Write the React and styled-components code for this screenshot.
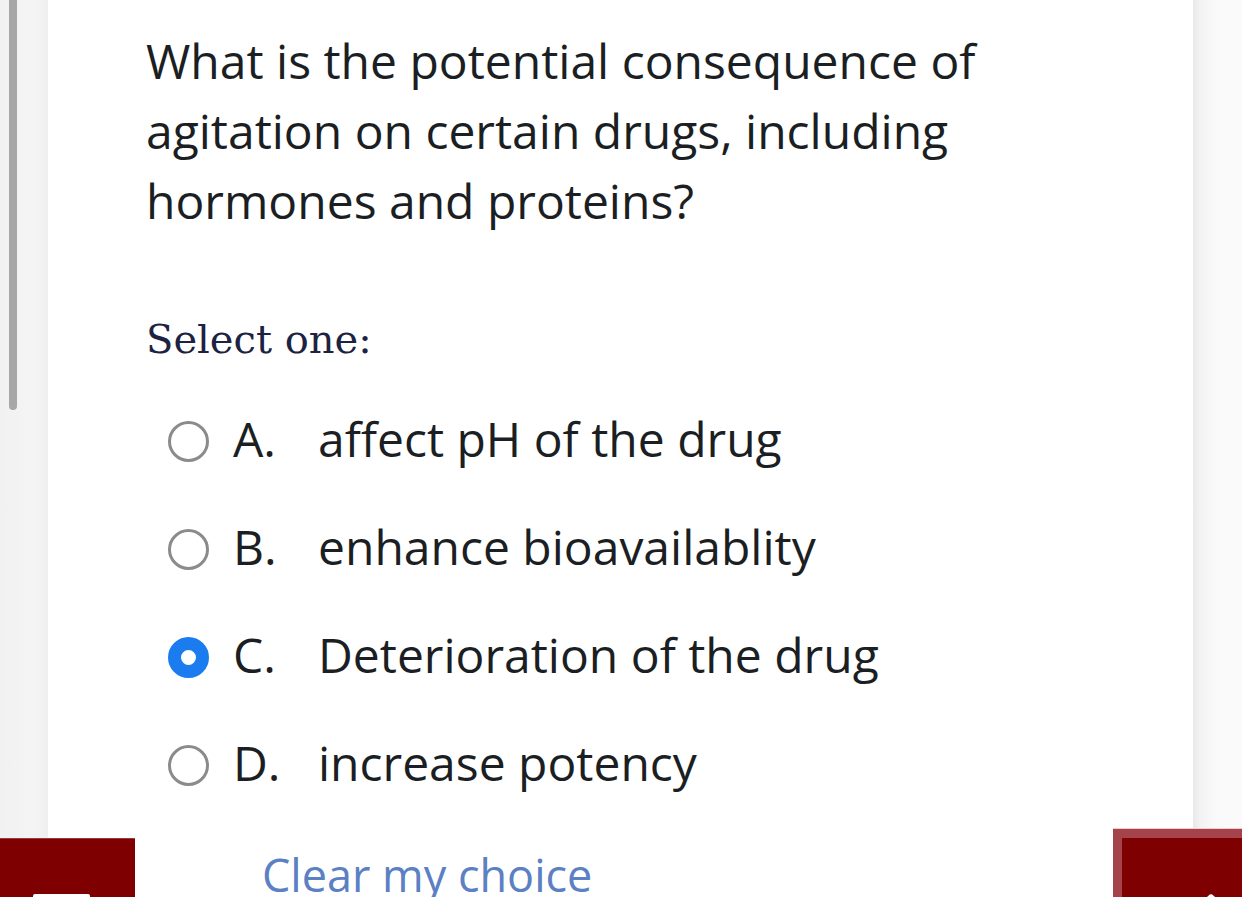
import React from "react";
import styled, { createGlobalStyle } from "styled-components";

const Global = createGlobalStyle`
  html, body {
    margin: 0;
    padding: 0;
    height: 897px;
    overflow: hidden;
    background: #ffffff;
  }
  body {
    font-family: "Open Sans", "Noto Sans", sans-serif;
    color: #1d2125;
  }
`;

const Page = styled.div`
  display: flex;
  height: 897px;
  overflow: hidden;
`;

const LeftGutter = styled.div`
  width: 48px;
  flex: none;
  padding-left: 9px;
  box-sizing: border-box;
  background: linear-gradient(to right, #f1f1f1 0%, #f4f4f4 70%, #efefef 100%);
`;

const Scrollbar = styled.div`
  width: 8px;
  height: 410px;
  background: #a7a7a7;
  border-radius: 0 0 4px 4px;
`;

const RightGutter = styled.div`
  width: 49px;
  flex: none;
  background: linear-gradient(to right, #e9e9e9 0%, #f3f3f3 15%, #f9f9f9 45%, #fbfbfb 100%);
`;

const Card = styled.main`
  flex: 1;
  background: #ffffff;
  padding: 26px 100px 0 98px;
  box-sizing: border-box;
`;

const Question = styled.p`
  margin: 0;
  font-size: 48px;
  line-height: 70px;
  color: #1b1f23;
`;

const Prompt = styled.div`
  margin-top: 80px;
  font-family: "DejaVu Serif", "Liberation Serif", serif;
  font-size: 40px;
  line-height: normal;
  color: #1c2342;
`;

const Options = styled.div`
  margin-top: 22px;
  padding-left: 22px;
`;

const OptionRow = styled.label`
  display: flex;
  align-items: center;
  height: 108px;
  font-size: 48px;
  line-height: normal;
  color: #1b1f23;
`;

const Radio = styled.span`
  flex: none;
  width: 41px;
  height: 41px;
  margin-top: 7px;
  box-sizing: border-box;
  border-radius: 50%;
  background: #ffffff;
  border: ${(p) => (p.$checked ? "13px solid #1b7cf0" : "3.5px solid #8b8b8b")};
`;

const Letter = styled.span`
  flex: none;
  width: 85px;
  margin-left: 24px;
`;

const Clear = styled.a`
  display: block;
  margin-top: 28px;
  padding-left: 116px;
  font-size: 45px;
  line-height: normal;
  color: #5b80c3;
  text-decoration: none;
`;

const NavButton = styled.div`
  position: fixed;
  left: 0;
  top: 838px;
  width: 135px;
  height: 70px;
  background: #7f0000;
  border-top: 1px solid #9a3a3a;
  box-sizing: border-box;
`;

const NavIconBar = styled.div`
  position: absolute;
  left: 33px;
  top: 55px;
  width: 57px;
  height: 6px;
  border-radius: 2px;
  background: #ffffff;
`;

const TopButton = styled.div`
  position: fixed;
  left: 1113px;
  top: 829px;
  width: 160px;
  height: 90px;
  box-sizing: border-box;
  background: #7f0000;
  border: 9px solid #a4434b;
  box-shadow: 0 -1px 0 #f3c9c9;
`;

const Caret = styled.svg`
  position: absolute;
  left: 65px;
  top: 50px;
`;

const options = [
  { letter: "A.", text: "affect pH of the drug" },
  { letter: "B.", text: "enhance bioavailablity" },
  { letter: "C.", text: "Deterioration of the drug", checked: true },
  { letter: "D.", text: "increase potency" },
];

export default function App() {
  return (
    <>
      <Global />
      <Page>
        <LeftGutter>
          <Scrollbar />
        </LeftGutter>
        <Card>
          <Question>
            What is the potential consequence of agitation on certain drugs, including hormones and proteins?
          </Question>
          <Prompt>Select one:</Prompt>
          <Options>
            {options.map((o) => (
              <OptionRow key={o.letter}>
                <Radio $checked={o.checked} />
                <Letter>{o.letter}</Letter>
                <span>{o.text}</span>
              </OptionRow>
            ))}
          </Options>
          <Clear href="#">Clear my choice</Clear>
        </Card>
        <RightGutter />
      </Page>
      <NavButton>
        <NavIconBar />
      </NavButton>
      <TopButton>
        <Caret width="48" height="30" viewBox="0 0 48 30">
          <path d="M6 26 L24 10 L42 26" fill="none" stroke="#ffffff" strokeWidth="7" strokeLinecap="round" strokeLinejoin="round" />
        </Caret>
      </TopButton>
    </>
  );
}
